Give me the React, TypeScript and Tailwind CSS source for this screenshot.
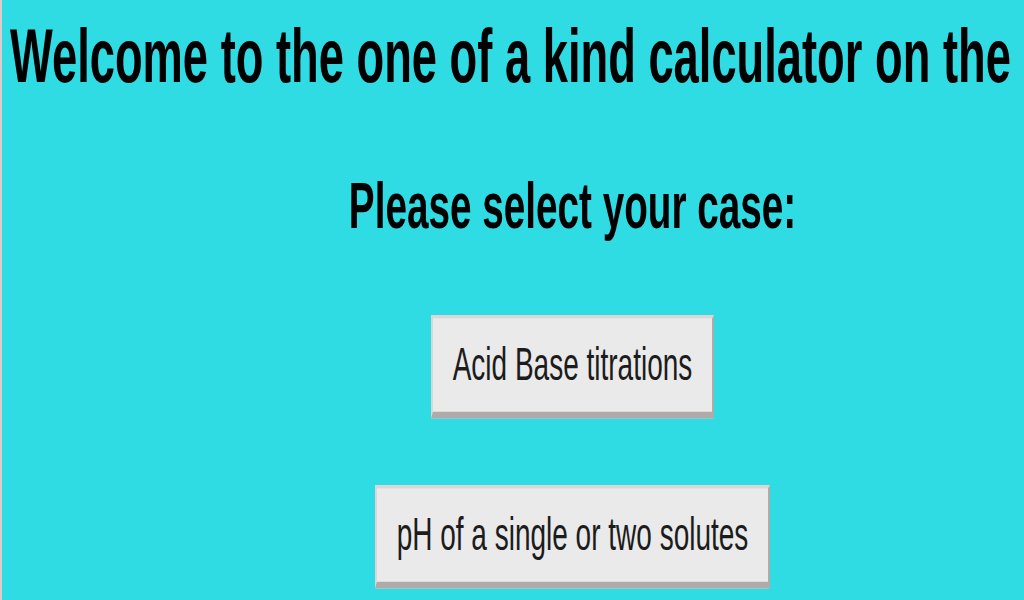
import React from "react";

const cases = ["Acid Base titrations", "pH of a single or two solutes"];

export default function App() {
  return (
    <div className="h-[600px] w-[1024px] overflow-hidden bg-[#30dce4] border-l-2 border-[#dccccc] font-['Liberation_Sans',Arial,sans-serif]">
      {/* the reference is stretched vertically, so the whole page is scaled */}
      <div className="origin-top scale-y-[1.667]">
        <h1 className="pt-[11px] pl-[8px] whitespace-nowrap text-[45.3px] leading-none font-bold text-black">
          Welcome to the one of a kind calculator on the
        </h1>
        <div className="flex flex-col items-center pl-[119px]">
          <h2 className="mt-[49px] text-[38.7px] leading-none font-bold text-black whitespace-nowrap">
            Please select your case:
          </h2>
          <div className="mt-[45px] flex flex-col items-center gap-[40px]">
            {cases.map((label) => (
              <button
                key={label}
                className="h-[62px] px-[20px] bg-[#eaeaea] border-2 border-b-[4px] border-t-[#dcd6d6] border-l-[#dcd6d6] border-r-[#b0aaaa] border-b-[#b0aaaa] text-[28px] leading-none text-[#1c1c1c] whitespace-nowrap"
              >
                {label}
              </button>
            ))}
          </div>
        </div>
      </div>
    </div>
  );
}
